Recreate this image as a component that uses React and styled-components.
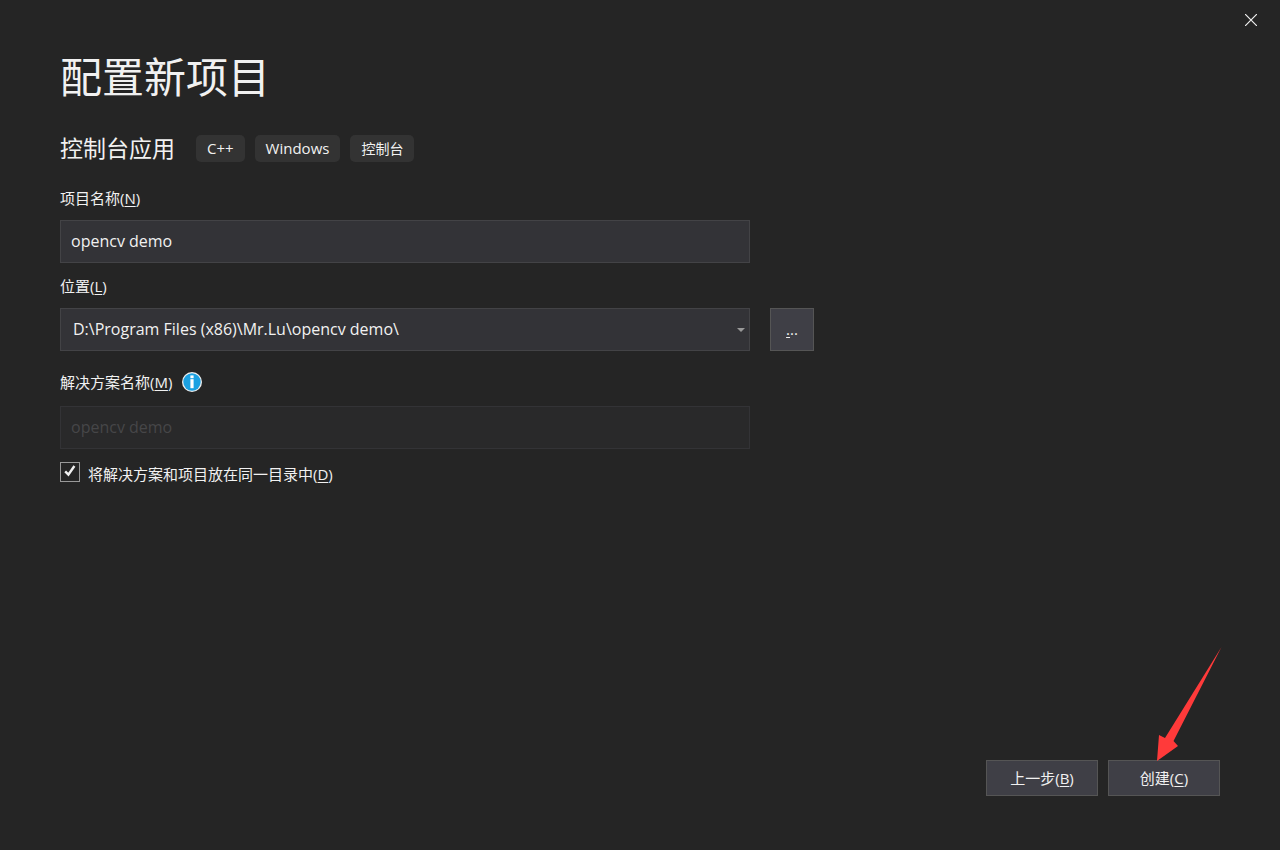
import React, { useState } from "react";
import styled, { createGlobalStyle } from "styled-components";

const GlobalStyle = createGlobalStyle`
  * {
    box-sizing: border-box;
  }

  body {
    margin: 0;
    background: #252525;
    color: #f1f1f1;
    font-family: "Open Sans", "Noto Sans CJK SC", sans-serif;
    font-size: 15px;
    line-height: 20px;
  }

  button,
  input,
  select {
    font-family: inherit;
    color: inherit;
  }
`;

const Dialog = styled.div`
  display: flex;
  flex-direction: column;
  min-height: 100vh;
  background: #252525;
`;

const TitleBar = styled.header`
  display: flex;
  justify-content: flex-end;
  padding: 8px 17px 0;
`;

const CloseButton = styled.button`
  display: flex;
  padding: 6px;
  border: none;
  background: none;
`;

const Content = styled.main`
  flex: 1;
  padding: 21px 60px 0;
`;

const Title = styled.h1`
  margin: 0;
  font-size: 42px;
  line-height: 48px;
  font-weight: 400;
`;

const Template = styled.div`
  display: flex;
  align-items: center;
  gap: 10px;
  margin: 31px 0 24px;
`;

const TemplateName = styled.h2`
  margin: 0 11px 0 0;
  font-size: 23px;
  line-height: 32px;
  font-weight: 400;
`;

const Tag = styled.span`
  padding: 4px 11px;
  border-radius: 5px;
  background: #333333;
  font-size: 15px;
  line-height: 19px;

  &:lang(zh) {
    font-size: 14px;
  }
`;

const Form = styled.form`
  width: 100%;
  max-width: 754px;
`;

const Field = styled.div`
  display: flex;
  flex-direction: column;
  gap: 12px;
  margin-bottom: ${(props) => (props.$spaced ? "21px" : "13px")};
`;

const LabelRow = styled.div`
  display: flex;
  align-items: flex-start;
  gap: 10px;
  height: 22px;
`;

const ControlRow = styled.div`
  display: flex;
  gap: 20px;
  padding-right: ${(props) => (props.$full ? "0" : "64px")};
`;

const TextInput = styled.input`
  width: 100%;
  height: 43px;
  padding: 0 10px 2px;
  border: 1px solid #434346;
  border-radius: 0;
  background: #333337;
  font-size: 16px;
  outline: none;

  &:disabled {
    border-color: #333336;
    background: #29292a;
    color: #464648;
  }
`;

const SelectBox = styled.div`
  position: relative;
  flex: 1;
`;

const Select = styled.select`
  display: block;
  width: 100%;
  height: 43px;
  padding: 0 24px 2px 12px;
  border: 1px solid #434346;
  border-radius: 0;
  background: #333337;
  font-size: 16px;
  appearance: none;
  outline: none;
`;

const Caret = styled.svg`
  position: absolute;
  top: 20px;
  right: 5px;
  pointer-events: none;
`;

const Button = styled.button`
  width: ${(props) => (props.$small ? "44px" : "112px")};
  height: ${(props) => (props.$small ? "43px" : "36px")};
  padding: 0 0 2px;
  border: 1px solid #555555;
  background: #3f3f46;
  font-size: 15px;
`;

const AccessKey = styled.span`
  text-decoration: underline;
  text-decoration-thickness: 1px;
  text-underline-offset: 2px;
`;

const CheckRow = styled.div`
  display: flex;
  align-items: flex-start;
  gap: 8px;

  label {
    padding-top: 2px;
  }
`;

const Checkbox = styled.span`
  position: relative;
  display: flex;

  input {
    width: 20px;
    height: 20px;
    margin: 0;
    border: 1px solid #999999;
    background: #252525;
    appearance: none;
  }

  svg {
    position: absolute;
    top: 3px;
    left: 4px;
    display: none;
    pointer-events: none;
  }

  input:checked + svg {
    display: block;
  }
`;

const Footer = styled.footer`
  display: flex;
  justify-content: flex-end;
  gap: 10px;
  padding: 0 60px 54px;
`;

const CreateAction = styled.div`
  position: relative;
`;

const Pointer = styled.svg`
  position: absolute;
  right: -2px;
  bottom: 35px;
  pointer-events: none;
`;

const InfoIcon = () => (
  <svg width="20" height="20" viewBox="0 0 20 20" aria-hidden="true">
    <circle cx="10" cy="10" r="10" fill="#f0f0f0" />
    <circle cx="10" cy="10" r="8.7" fill="#1ba1e2" />
    <rect x="8.4" y="3.4" width="3.2" height="2.8" fill="#fff" />
    <rect x="8.4" y="7.2" width="3.2" height="9" fill="#fff" />
  </svg>
);

const tags = [
  { text: "C++", lang: "en" },
  { text: "Windows", lang: "en" },
  { text: "控制台", lang: "zh" },
];

const App = () => {
  const [name, setName] = useState("opencv demo");
  const [sameFolder, setSameFolder] = useState(true);

  return (
    <Dialog>
      <GlobalStyle />

      <TitleBar>
        <CloseButton type="button" aria-label="关闭">
          <svg width="12" height="12" viewBox="0 0 12 12" fill="none" stroke="#f1f1f1" strokeWidth="1.2">
            <path d="M0 0L12 12M12 0L0 12" />
          </svg>
        </CloseButton>
      </TitleBar>

      <Content>
        <Title>配置新项目</Title>

        <Template>
          <TemplateName>控制台应用</TemplateName>
          {tags.map((tag) => (
            <Tag key={tag.text} lang={tag.lang}>
              {tag.text}
            </Tag>
          ))}
        </Template>

        <Form id="project" onSubmit={(e) => e.preventDefault()}>
          <Field>
            <label htmlFor="name">
              项目名称(<AccessKey>N</AccessKey>)
            </label>
            <ControlRow>
              <TextInput id="name" value={name} onChange={(e) => setName(e.target.value)} />
            </ControlRow>
          </Field>

          <Field $spaced>
            <label htmlFor="location">
              位置(<AccessKey>L</AccessKey>)
            </label>
            <ControlRow $full>
              <SelectBox>
                <Select id="location">
                  <option>D:\Program Files (x86)\Mr.Lu\opencv demo\</option>
                </Select>
                <Caret width="8" height="4" viewBox="0 0 8 4" aria-hidden="true">
                  <path d="M0 0H8L4 4Z" fill="#999999" />
                </Caret>
              </SelectBox>
              <Button type="button" $small aria-label="浏览">
                <AccessKey>.</AccessKey>..
              </Button>
            </ControlRow>
          </Field>

          <Field>
            <LabelRow>
              <label htmlFor="solution">
                解决方案名称(<AccessKey>M</AccessKey>)
              </label>
              <InfoIcon />
            </LabelRow>
            <ControlRow>
              <TextInput id="solution" value={name} disabled readOnly />
            </ControlRow>
          </Field>

          <CheckRow>
            <Checkbox>
              <input
                id="same-folder"
                type="checkbox"
                checked={sameFolder}
                onChange={(e) => setSameFolder(e.target.checked)}
              />
              <svg width="12" height="12" viewBox="0 0 12 12" aria-hidden="true">
                <path d="M1.2 6.4L4.4 9.6L10.4 1" fill="none" stroke="#f1f1f1" strokeWidth="2.4" />
              </svg>
            </Checkbox>
            <label htmlFor="same-folder">
              将解决方案和项目放在同一目录中(<AccessKey>D</AccessKey>)
            </label>
          </CheckRow>
        </Form>
      </Content>

      <Footer>
        <Button type="button">
          上一步(<AccessKey>B</AccessKey>)
        </Button>
        <CreateAction>
          <Button type="submit" form="project">
            创建(<AccessKey>C</AccessKey>)
          </Button>
          <Pointer width="66" height="115" viewBox="0 0 66 115" aria-hidden="true">
            <path d="M65.5 1L17.5 95L22 100L1 115L3 89L9 92Z" fill="#ff3a3a" />
          </Pointer>
        </CreateAction>
      </Footer>
    </Dialog>
  );
};

export default App;
